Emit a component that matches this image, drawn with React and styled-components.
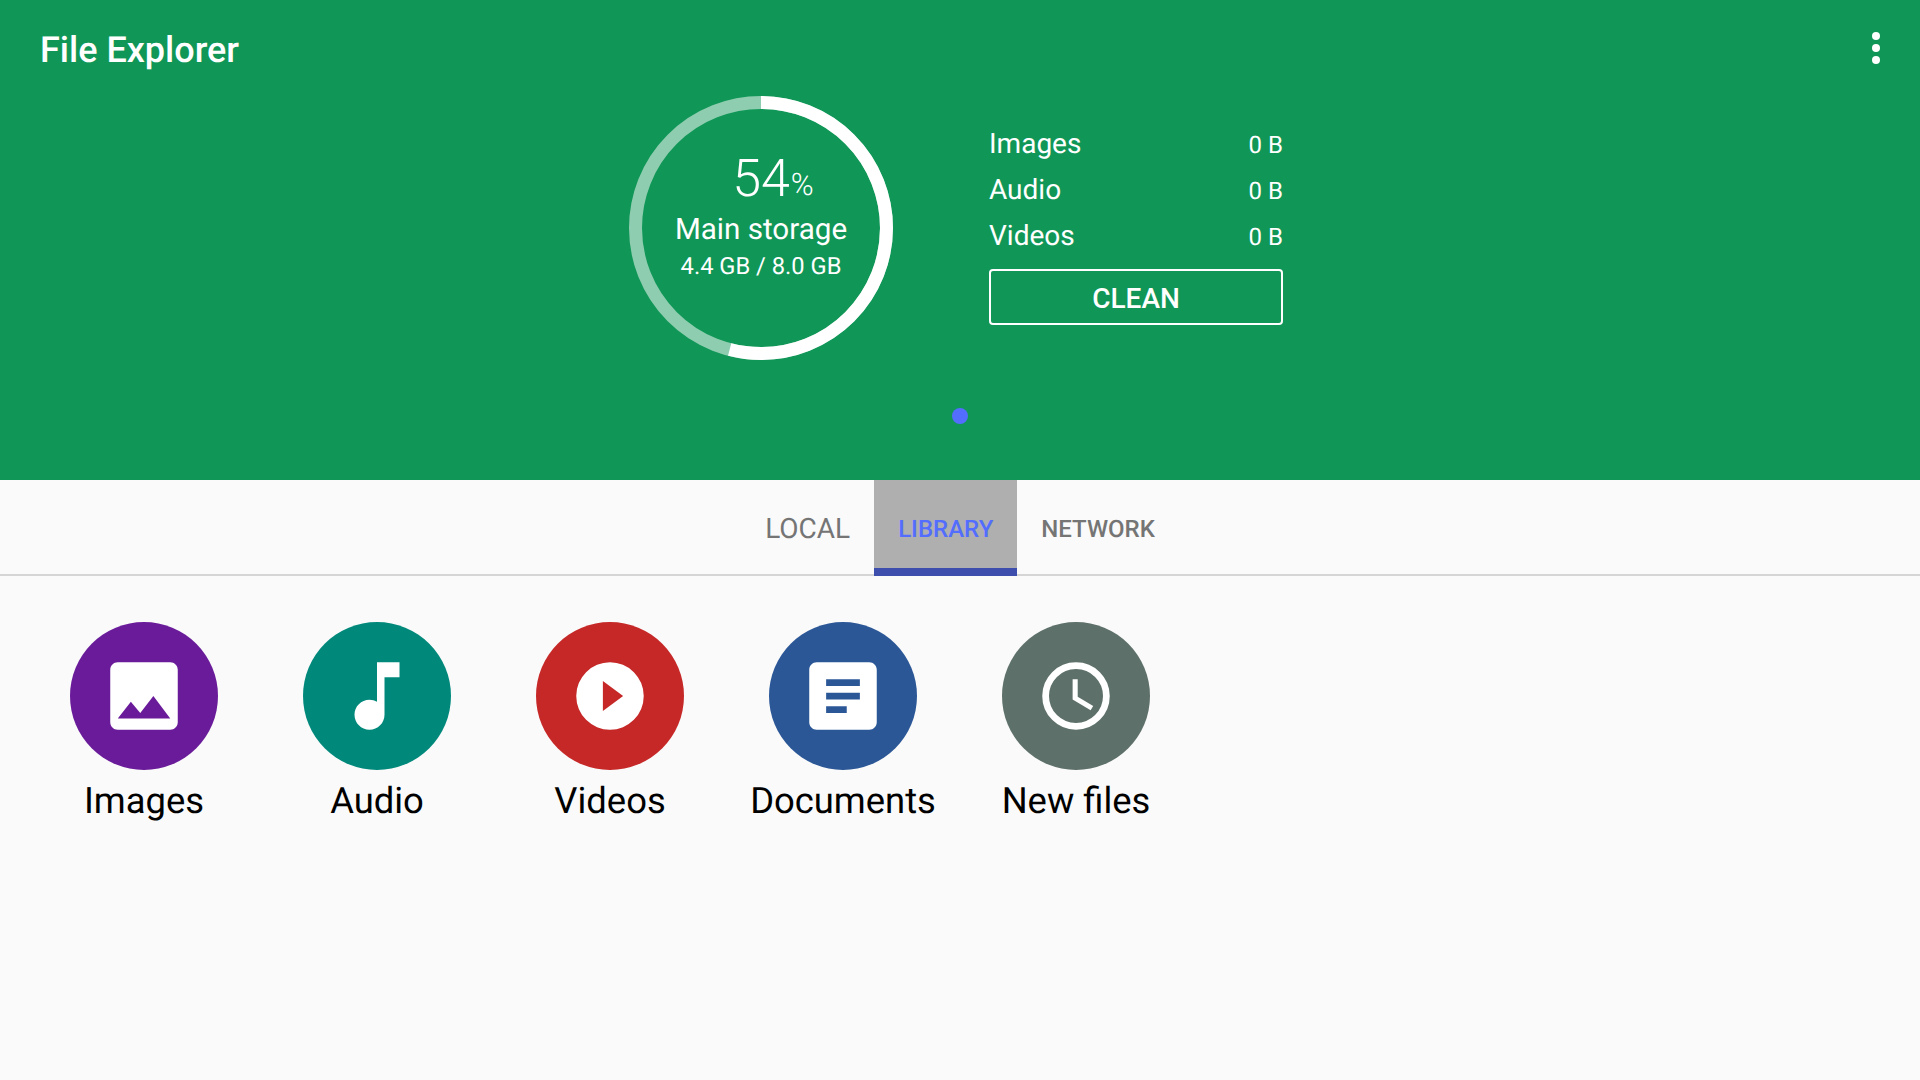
import React from "react";
import styled, { createGlobalStyle } from "styled-components";

const GlobalStyle = createGlobalStyle`
  html, body {
    margin: 0;
    padding: 0;
    background: #fafafa;
  }
  body {
    font-family: Roboto, "Liberation Sans", sans-serif;
    text-rendering: geometricPrecision;
    overflow: hidden;
  }
`;

const RING_RADIUS = 125.5;
const RING_LENGTH = 2 * Math.PI * RING_RADIUS;
const USED_PERCENT = 54;

const stats = [
  { name: "Images", size: "0 B" },
  { name: "Audio", size: "0 B" },
  { name: "Videos", size: "0 B" },
];

const tabs = [
  { name: "LOCAL", large: true },
  { name: "LIBRARY", active: true },
  { name: "NETWORK" },
];

const ImagesIcon = () => (
  <path d="M21 19V5c0-1.1-.9-2-2-2H5c-1.1 0-2 .9-2 2v14c0 1.1.9 2 2 2h14c1.1 0 2-.9 2-2zM8.5 13.5l2.5 3.01L14.5 12l4.5 6H5l3.5-4.5z" />
);

const AudioIcon = () => (
  <path d="M12 3v10.55c-.59-.34-1.27-.55-2-.55-2.21 0-4 1.79-4 4s1.79 4 4 4 4-1.79 4-4V7h4V3h-6z" />
);

const VideosIcon = () => (
  <path
    fillRule="evenodd"
    d="M12 3a9 9 0 1 0 0 18 9 9 0 0 0 0-18zM10.1 8v8l5.4-4z"
  />
);

const DocumentsIcon = () => (
  <path
    fillRule="evenodd"
    d="M5 3h14c1.1 0 2 .9 2 2v14c0 1.1-.9 2-2 2H5c-1.1 0-2-.9-2-2V5c0-1.1.9-2 2-2zM7.5 7.5v1.8h9V7.5zM7.5 11.1v1.8h9v-1.8zM7.5 14.7v1.8H13v-1.8z"
  />
);

const NewFilesIcon = () => (
  <>
    <circle cx="12" cy="12" r="8.1" fill="none" stroke="#fff" strokeWidth="1.8" />
    <path d="M12.45 7.5H11.1v5.4l4.8 2.88.68-1.1-4.13-2.45z" />
  </>
);

const categories = [
  { name: "Images", color: "#6a1b9a", Icon: ImagesIcon },
  { name: "Audio", color: "#00897b", Icon: AudioIcon },
  { name: "Videos", color: "#c62828", Icon: VideosIcon },
  { name: "Documents", color: "#2b5797", Icon: DocumentsIcon },
  { name: "New files", color: "#5e706a", Icon: NewFilesIcon },
];

const App = () => (
  <Page>
    <GlobalStyle />
    <Header>
      <TopBar>
        <Title>File Explorer</Title>
        <MoreIcon viewBox="0 0 8 32">
          <circle cx="4" cy="4" r="4" />
          <circle cx="4" cy="16" r="4" />
          <circle cx="4" cy="28" r="4" />
        </MoreIcon>
      </TopBar>
      <Hero>
        <Ring>
          <RingSvg viewBox="0 0 264 264">
            <circle
              cx="132"
              cy="132"
              r={RING_RADIUS}
              fill="none"
              stroke="#8fcdb0"
              strokeWidth="13"
            />
            <circle
              cx="132"
              cy="132"
              r={RING_RADIUS}
              fill="none"
              stroke="#fff"
              strokeWidth="13"
              strokeDasharray={`${(RING_LENGTH * USED_PERCENT) / 100} ${RING_LENGTH}`}
              transform="rotate(-90 132 132)"
            />
          </RingSvg>
          <RingText>
            <Percent>
              54<PercentSign>%</PercentSign>
            </Percent>
            <StorageName>Main storage</StorageName>
            <StorageSize>4.4 GB / 8.0 GB</StorageSize>
          </RingText>
        </Ring>
        <Stats>
          {stats.map(({ name, size }) => (
            <StatRow key={name}>
              <StatName>{name}</StatName>
              <StatSize>{size}</StatSize>
            </StatRow>
          ))}
          <CleanButton>CLEAN</CleanButton>
        </Stats>
      </Hero>
      <PageDot />
    </Header>
    <TabBar>
      {tabs.map(({ name, large, active }) => (
        <Tab key={name} $large={large} $active={active}>
          {name}
        </Tab>
      ))}
    </TabBar>
    <Categories>
      {categories.map(({ name, color, Icon }) => (
        <Category key={name}>
          <CategoryCircle $color={color}>
            <CategoryIcon viewBox="0 0 24 24">
              <Icon />
            </CategoryIcon>
          </CategoryCircle>
          <CategoryName>{name}</CategoryName>
        </Category>
      ))}
    </Categories>
  </Page>
);

export default App;

const Page = styled.div`
  width: 100%;
  min-height: 100vh;
  background: #fafafa;
`;

const Header = styled.header`
  height: 480px;
  box-sizing: border-box;
  background: #109757;
  color: #fff;
  display: flex;
  flex-direction: column;
  align-items: center;
`;

const TopBar = styled.div`
  width: 100%;
  height: 96px;
  box-sizing: border-box;
  padding: 0 40px;
  display: flex;
  justify-content: space-between;
  align-items: flex-start;
`;

const Title = styled.div`
  margin-top: 29px;
  font-size: 36px;
  line-height: 42px;
  font-weight: 500;
`;

const MoreIcon = styled.svg`
  width: 8px;
  height: 32px;
  margin-top: 32px;
  fill: #fff;
`;

const Hero = styled.div`
  display: flex;
  gap: 96px;
  padding-right: 8px;
`;

const Ring = styled.div`
  width: 264px;
  height: 264px;
  display: grid;
`;

const RingSvg = styled.svg`
  grid-area: 1 / 1;
  width: 264px;
  height: 264px;
`;

const RingText = styled.div`
  grid-area: 1 / 1;
  padding-top: 53px;
  display: flex;
  flex-direction: column;
  align-items: center;
`;

const Percent = styled.div`
  position: relative;
  font-size: 52px;
  line-height: 60px;
  font-weight: 300;
`;

const PercentSign = styled.span`
  position: absolute;
  left: calc(100% + 1px);
  bottom: 7px;
  font-size: 31px;
  line-height: 34px;
  font-weight: 300;
`;

const StorageName = styled.div`
  margin-top: 2px;
  font-size: 29.6px;
  line-height: 38px;
`;

const StorageSize = styled.div`
  margin-top: 2px;
  font-size: 23.7px;
  line-height: 30px;
`;

const Stats = styled.div`
  width: 294px;
  padding-top: 25px;
`;

const StatRow = styled.div`
  height: 46px;
  display: flex;
  justify-content: space-between;
  align-items: baseline;
`;

const StatName = styled.span`
  font-size: 28px;
  line-height: 46px;
`;

const StatSize = styled.span`
  font-size: 24px;
  line-height: 46px;
`;

const CleanButton = styled.button`
  display: block;
  width: 294px;
  height: 56px;
  margin-top: 10px;
  padding: 3px 0 0;
  box-sizing: border-box;
  border: 2px solid #fff;
  border-radius: 4px;
  background: transparent;
  color: #fff;
  font-family: inherit;
  font-size: 28px;
  font-weight: 500;
`;

const PageDot = styled.div`
  width: 16px;
  height: 16px;
  margin-top: 48px;
  border-radius: 50%;
  background: #536dfe;
`;

const TabBar = styled.nav`
  height: 96px;
  box-sizing: border-box;
  border-bottom: 2px solid #d5d5d5;
  display: flex;
  justify-content: center;
`;

const Tab = styled.div`
  height: 96px;
  box-sizing: border-box;
  padding: 9px 24px 0;
  display: flex;
  align-items: center;
  font-size: ${({ $large }) => ($large ? "28px" : "24px")};
  color: ${({ $active }) => ($active ? "#536dfe" : "#757575")};
  background: ${({ $active }) => ($active ? "#afafaf" : "transparent")};
  border-bottom: 8px solid ${({ $active }) => ($active ? "#3d4eac" : "transparent")};
  font-weight: ${({ $large }) => ($large ? 400 : 500)};
`;

const Categories = styled.main`
  padding: 46px 0 0 27.5px;
  display: flex;
`;

const Category = styled.div`
  width: 233px;
  display: flex;
  flex-direction: column;
  align-items: center;
`;

const CategoryCircle = styled.div`
  width: 148px;
  height: 148px;
  border-radius: 50%;
  background: ${({ $color }) => $color};
  display: flex;
  align-items: center;
  justify-content: center;
`;

const CategoryIcon = styled.svg`
  width: 90px;
  height: 90px;
  fill: #fff;
`;

const CategoryName = styled.div`
  margin-top: 9.5px;
  font-size: 36.4px;
  line-height: 42px;
  color: #000;
  white-space: nowrap;
`;
